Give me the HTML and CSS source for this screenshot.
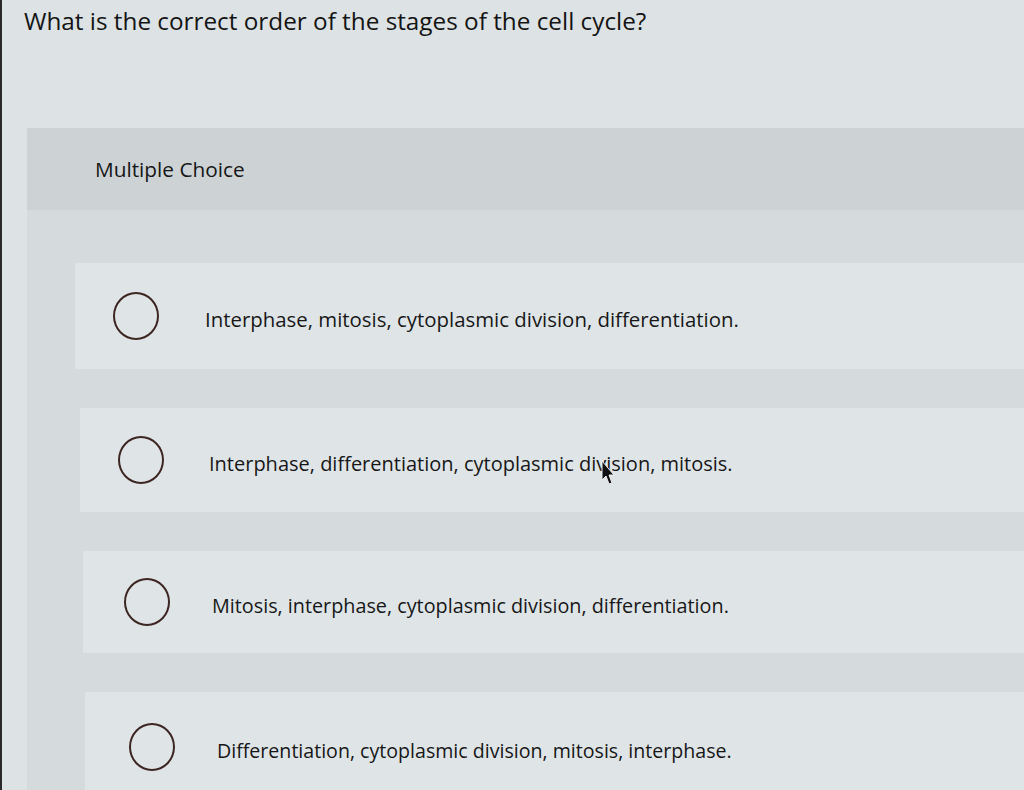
FILE: index.html
```html
<!DOCTYPE html>
<html lang="en">
<head>
<meta charset="utf-8">
<title>Cell cycle question</title>
<link rel="stylesheet" href="styles.css">
</head>
<body>
<main class="page">
  <h1 class="title">What is the correct order of the stages of the cell cycle?</h1>
  <section class="question">
    <div class="qhead">Multiple Choice</div>
    <div class="choices">
      <label class="choice c1"><span class="radio"></span><span class="ctext">Interphase, mitosis, cytoplasmic division, differentiation.</span></label>
      <label class="choice c2"><span class="radio"></span><span class="ctext">Interphase, differentiation, cytoplasmic division, mitosis.</span>
        <svg class="cursor" width="16" height="26" viewBox="0 0 16 26"><path d="M2 1 L2 20 L6 16 L9 24 L12 23 L9 15 L14 15 Z" fill="#111" stroke="#eee" stroke-width="1"/></svg>
      </label>
      <label class="choice c3"><span class="radio"></span><span class="ctext">Mitosis, interphase, cytoplasmic division, differentiation.</span></label>
      <label class="choice c4"><span class="radio"></span><span class="ctext">Differentiation, cytoplasmic division, mitosis, interphase.</span></label>
    </div>
  </section>
</main>
</body>
</html>
```

FILE: styles.css
```css
html, body {
  margin: 0;
  padding: 0;
}
body {
  background: #dde3e4;
  font-family: "Open Sans", "Liberation Sans", sans-serif;
  font-variant-ligatures: none;
  color: #1a1a1a;
  height: 790px;
  overflow: hidden;
}
.page {
  border-left: 2px solid #2a2a2a;
  height: 790px;
  box-sizing: border-box;
  overflow: hidden;
}
.title {
  margin: 0;
  padding: 4px 0 0 22px;
  height: 128px;
  box-sizing: border-box;
  font-size: 24.3px;
  font-weight: 500;
  line-height: 34px;
  color: #141414;
}
.question {
  margin-left: 25px;
}
.qhead {
  height: 82px;
  background: #cdd3d5;
  box-sizing: border-box;
  padding: 28px 0 0 68px;
  font-size: 20.8px;
  font-weight: 500;
  line-height: 26px;
  color: #161616;
}
.choices {
  background: #d5dbdd;
  padding-top: 53px;
  display: flex;
  flex-direction: column;
  gap: 39px;
  height: 580px;
  box-sizing: border-box;
  overflow: hidden;
}
.choice {
  position: relative;
  display: flex;
  align-items: center;
  flex: none;
  background: #dfe5e7;
  height: 106px;
  margin-left: 48px;
  padding-left: 38px;
}
.radio {
  width: 42px;
  height: 44px;
  border: 2px solid #3d2522;
  border-radius: 50%;
  flex: none;
  margin-right: 46px;
}
.ctext {
  font-size: 20.4px;
  font-weight: 500;
  color: #171717;
  margin-top: 6px;
}
.choice.c2 { margin-left: 53px; height: 104px; }
.choice.c2 .radio { margin-right: 45px; }
.choice.c2 .ctext { font-size: 20px; }
.choice.c3 { margin-left: 56px; height: 102px; padding-left: 41px; }
.choice.c3 .radio { margin-right: 42px; }
.choice.c3 .ctext { font-size: 19.8px; }
.choice.c4 { margin-left: 58px; height: 110px; padding-left: 44px; }
.choice.c4 .radio { margin-right: 42px; }
.choice.c4 .ctext { font-size: 19.6px; }
.cursor {
  position: absolute;
  left: 520px;
  top: 52px;
}
```
